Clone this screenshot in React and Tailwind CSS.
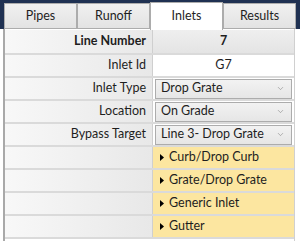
import { ChevronDown } from 'lucide-react'

const font = { fontFamily: 'Lato, "Noto Sans", sans-serif' }

const tabs = ['Pipes', 'Runoff', 'Inlets', 'Results']

function Label({ children, bold }) {
  return (
    <div
      className={`h-full flex items-center justify-end pr-[6px] border-r border-[#cfcfcf] bg-gradient-to-r from-[#f8f8f8] to-[#e8e8e8] ${
        bold ? 'font-bold' : ''
      }`}
    >
      {children}
    </div>
  )
}

function Select({ value }) {
  return (
    <div className="h-full flex items-center px-[2px]">
      <div className="w-full h-[20px] flex items-center justify-between pl-[5px] pr-[6px] border border-[#acacac] bg-gradient-to-b from-[#f2f2f2] to-[#e6e6e6]">
        <span>{value}</span>
        <ChevronDown className="w-[9px] h-[9px] text-[#808080]" strokeWidth={1.5} />
      </div>
    </div>
  )
}

function Group({ name }) {
  return (
    <div className="h-full flex items-center gap-[5px] pl-[7px] bg-[#fce6a0]">
      <svg width="4" height="7" viewBox="0 0 4 7">
        <path d="M0 0 L4 3.5 L0 7 Z" fill="#000" />
      </svg>
      <span>{name}</span>
    </div>
  )
}

export default function App() {
  const rows = [
    { label: 'Inlet Id', value: <div className="h-full flex items-center justify-center">G7</div> },
    { label: 'Inlet Type', value: <Select value="Drop Grate" /> },
    { label: 'Location', value: <Select value="On Grade" /> },
    { label: 'Bypass Target', value: <Select value="Line 3- Drop Grate" /> },
    { label: '', value: <Group name="Curb/Drop Curb" /> },
    { label: '', value: <Group name="Grate/Drop Grate" /> },
    { label: '', value: <Group name="Generic Inlet" /> },
    { label: '', value: <Group name="Gutter" /> },
  ]

  return (
    <div className="w-[300px] h-[241px] bg-white overflow-hidden text-[12.5px] text-[#1e1e1e]" style={font}>
      <div className="h-[29px] bg-[#1f3152] flex items-end pl-[4px]">
        {tabs.map((t) =>
          t === 'Inlets' ? (
            <div
              key={t}
              className="w-[73px] h-[28px] -mb-[1px] bg-white border border-b-0 border-[#acacac] flex items-center justify-center"
            >
              {t}
            </div>
          ) : (
            <div
              key={t}
              className="w-[73px] h-[26px] bg-gradient-to-b from-[#f0f0f0] to-[#e3e3e3] border border-[#acacac] flex items-center justify-center"
            >
              {t}
            </div>
          )
        )}
      </div>
      <div className="ml-[3px] w-[292px] h-[212px] pt-[1px] border-l-2 border-[#a9a9a9] border-r border-r-[#d0d0d0]">
        <div className="grid grid-cols-[148px_1fr] h-[25px] border-b-2 border-[#dadada]">
          <Label bold>Line Number</Label>
          <div className="h-full flex items-center justify-center font-bold bg-gradient-to-b from-[#efefef] to-[#e4e4e4]">
            7
          </div>
        </div>
        {rows.map((r, i) => (
          <div key={i} className="grid grid-cols-[148px_1fr] h-[23px] border-b-2 border-[#dadada]">
            <Label>{r.label}</Label>
            {r.value}
          </div>
        ))}
      </div>
    </div>
  )
}
